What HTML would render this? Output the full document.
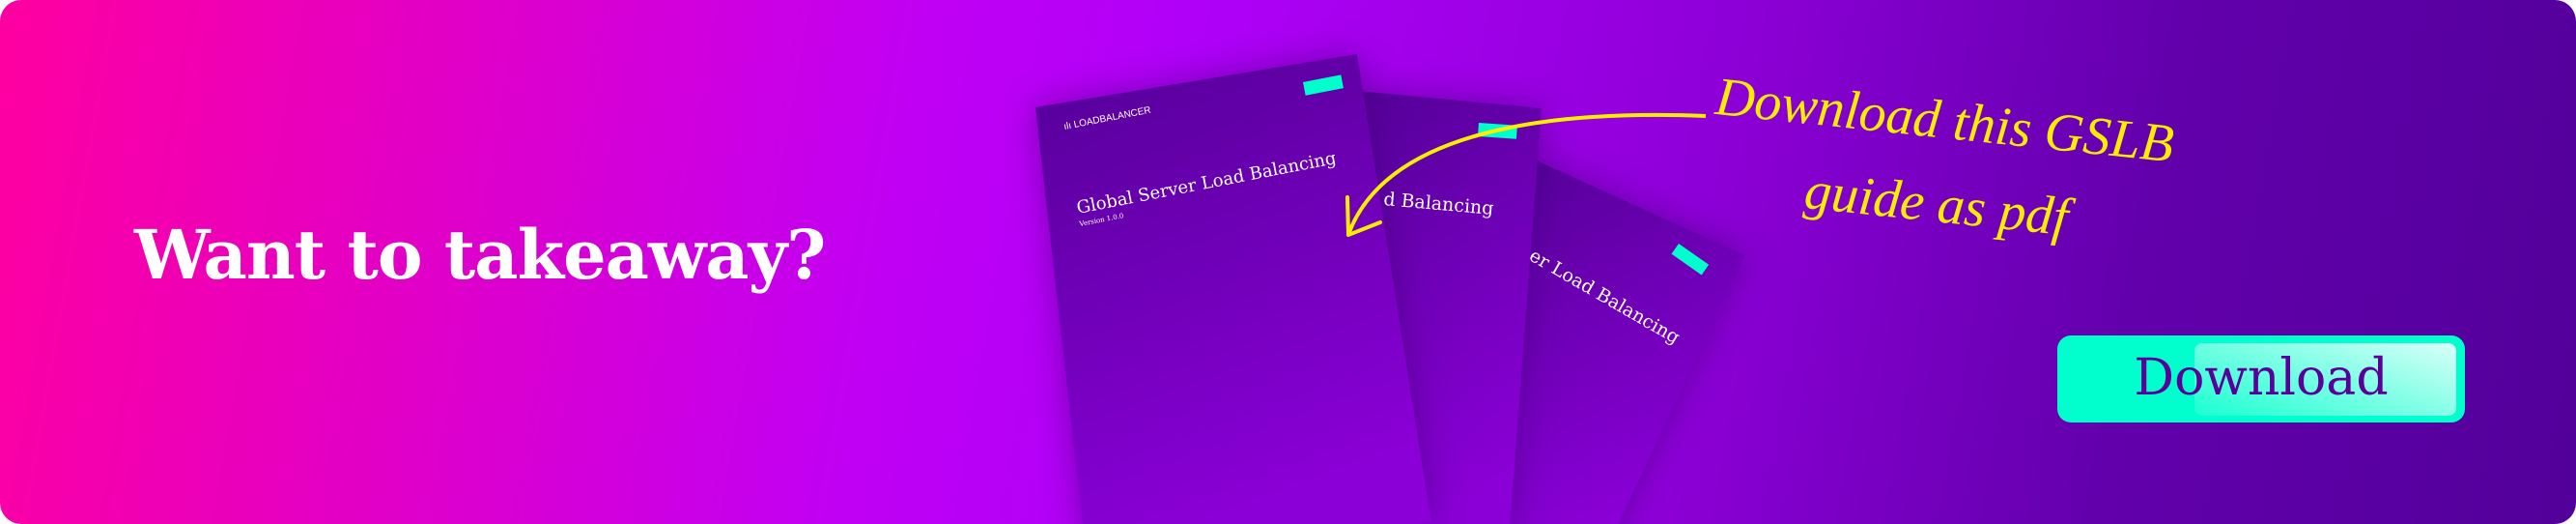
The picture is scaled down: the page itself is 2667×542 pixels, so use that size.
<!DOCTYPE html>
<html><head><meta charset="utf-8"><style>
html,body{margin:0;padding:0;background:#fff;}
.wrap{position:relative;width:2667px;height:542px;border-radius:22px;overflow:hidden;
background:linear-gradient(100deg,#ff00a0 0%,#e000c8 18%,#c000f4 35%,#b000f8 45%,#8e00d8 65%,#6200ac 82%,#52009a 100%);}
h1{position:absolute;left:139px;top:222px;margin:0;font-family:"DejaVu Serif","Liberation Serif",serif;font-weight:bold;font-size:70px;color:#fff;letter-spacing:-1px;}
.hand{position:absolute;font-family:"Liberation Serif",serif;font-style:italic;color:#ffee00;font-size:56px;transform-origin:0 0;transform:rotate(6deg);}
.btn{position:absolute;left:2130px;top:347px;width:422px;height:90px;border-radius:14px;background:#00ffcc;overflow:hidden;}
.btn .gl{position:absolute;left:142px;top:8px;width:271px;height:75px;border-radius:8px;background:linear-gradient(200deg,rgba(255,255,255,0.85),rgba(255,255,255,0.1));}
.btn span{position:absolute;left:0;right:0;top:14px;text-align:center;font-family:"DejaVu Serif","Liberation Serif",serif;font-size:52px;color:#5a0099;}
</style></head><body>
<div class="wrap">
<h1>Want to takeaway?</h1>
<svg width="2667" height="542" style="position:absolute;left:0;top:0">
<defs>
<linearGradient id="pg" x1="0" y1="0" x2="0.3" y2="1"><stop offset="0" stop-color="#540098"/><stop offset="1" stop-color="#8a00d6"/></linearGradient>
<filter id="sh" x="-30%" y="-30%" width="160%" height="160%"><feGaussianBlur stdDeviation="18"/></filter>
</defs>
<polygon points="1582,162 1806,264 1667,560 1540,560" fill="#3a0070" opacity="0.5" filter="url(#sh)"/>
<polygon points="1582,162 1806,264 1667,560 1540,560" fill="url(#pg)"/>
<polygon points="1405,94 1596,112 1562,560 1460,560" fill="#3a0070" opacity="0.5" filter="url(#sh)"/>
<polygon points="1405,94 1596,112 1562,560 1460,560" fill="url(#pg)"/>
<polygon points="1072,111 1405,56 1482,541 1123,560" fill="#3a0070" opacity="0.5" filter="url(#sh)"/>
<polygon points="1072,111 1405,56 1482,541 1123,560" fill="url(#pg)"/>
<g fill="#fff" font-family="DejaVu Serif,serif">
<text x="1116" y="221" font-size="18" transform="rotate(-11 1116 221)">Global Server Load Balancing</text>
<text x="1118" y="234" font-size="7" transform="rotate(-11 1118 234)">Version 1.0.0</text>
<text x="1102" y="134" font-size="10" font-family="Liberation Sans" transform="rotate(-11 1102 134)">ılı LOADBALANCER</text>
<text x="1432" y="212" font-size="19" transform="rotate(5 1432 212)">d Balancing</text>
<text x="1582" y="268" font-size="19" transform="rotate(30 1582 268)">er Load Balancing</text>
</g>
<rect x="1349" y="85" width="40" height="14" fill="#00ffcc" transform="rotate(-11 1349 85)"/>
<rect x="1531" y="127" width="40" height="14" fill="#00ffcc" transform="rotate(4 1531 127)"/>
<rect x="1738" y="252" width="38" height="13" fill="#00ffcc" transform="rotate(35 1738 252)"/>
<path d="M1766,120 C1620,114 1440,130 1397,240" stroke="#ffee00" stroke-width="4" fill="none"/>
<path d="M1395,204 L1396,243 L1429,230" stroke="#ffee00" stroke-width="4" fill="none" stroke-linecap="round" stroke-linejoin="round"/>
</svg>
<div class="hand" style="left:1780px;top:68px;">Download this GSLB</div>
<div class="hand" style="left:1872px;top:165px;">guide as pdf</div>
<div class="btn"><div class="gl"></div><span>Download</span></div>
</div>
</body></html>
